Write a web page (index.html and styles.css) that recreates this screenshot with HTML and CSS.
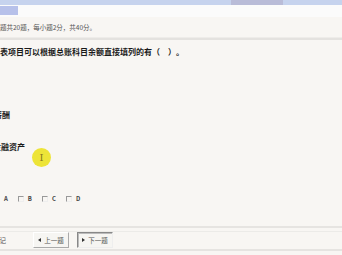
FILE: index.html
```html
<!DOCTYPE html>
<html lang="zh">
<head>
<meta charset="utf-8">
<link rel="stylesheet" href="styles.css">
</head>
<body>
<div class="page">
  <div class="topbar"><span class="tab-hl"></span></div>
  <div class="subbar"><span class="sel"></span></div>
  <div class="info">本类题共20题，每小题2分，共40分。</div>
  <div class="rule"></div>
  <div class="question">表项目可以根据总账科目余额直接填列的有（　）。</div>
  <div class="opt opt-b">应付职工薪酬</div>
  <div class="opt opt-c">交易性金融资产</div>
  <div class="answers">
    <span class="ans">A</span>
    <span class="ans"><i class="box"></i>B</span>
    <span class="ans"><i class="box"></i>C</span>
    <span class="ans"><i class="box"></i>D</span>
  </div>
  <div class="footer">
    <span class="mark">标记</span>
    <button class="btn"><i class="tri tri-l"></i>上一题</button>
    <button class="btn btn-on"><i class="tri tri-r"></i>下一题</button>
  </div>
  <div class="cursor"><span>I</span></div>
</div>
</body>
</html>
```

FILE: styles.css
```css
html, body {
  margin: 0;
  padding: 0;
  width: 342px;
  height: 255px;
  overflow: hidden;
  background: #f8f6f3;
  font-family: "Noto Sans CJK SC", "Noto Sans", sans-serif;
}
.page {
  position: relative;
  width: 342px;
  height: 255px;
  display: flex;
  flex-direction: column;
}
.topbar {
  height: 5px;
  background: #c6d3ee;
  position: relative;
}
.tab-hl {
  position: absolute;
  left: 231px;
  top: 0;
  width: 52px;
  height: 5px;
  background: #b9bcd8;
}
.subbar {
  height: 12px;
  background: #fbfbfb;
  display: flex;
  align-items: flex-start;
  padding-top: 1px;
  box-sizing: border-box;
}
.sel {
  width: 18px;
  height: 9px;
  background: #b7c1ea;
}
.info {
  height: 20px;
  line-height: 20px;
  font-size: 6.5px;
  color: #555;
  margin-left: -13px;
  white-space: nowrap;
}
.rule {
  height: 2px;
  background: #e4e2df;
  border-top: 1px solid #eeece9;
}
.question {
  margin-top: 6px;
  height: 12px;
  line-height: 12px;
  font-size: 8px;
  font-weight: bold;
  color: #1a1a1a;
  white-space: nowrap;
}
.opt {
  font-size: 8px;
  font-weight: bold;
  color: #1a1a1a;
  white-space: nowrap;
  height: 12px;
  line-height: 12px;
}
.opt-b { margin-top: 51px; margin-left: -38px; }
.opt-c { margin-top: 20px; margin-left: -31px; }
.answers {
  margin-top: 41px;
  display: flex;
  gap: 10px;
  padding-left: 4px;
  height: 10px;
  line-height: 10px;
  font-size: 6px;
  font-weight: bold;
  color: #444;
}
.ans {
  display: flex;
  align-items: center;
  gap: 4px;
}
.box {
  width: 4px;
  height: 4px;
  border-left: 1px solid #999;
  border-top: 1px solid #999;
  border-right: 1px solid #eee;
  border-bottom: 1px solid #eee;
}
.footer {
  margin-top: 22px;
  border-top: 2px solid #e6e4e1;
  border-bottom: 2px solid #e6e4e1;
  padding: 4px 0 1px;
  height: 16px;
  display: flex;
  align-items: center;
  gap: 8px;
  position: relative;
}
.footer::before {
  content: "";
  position: absolute;
  left: 0; right: 0; top: 3px;
  height: 1px;
  background: #ecebe8;
}
.mark {
  font-size: 6.5px;
  color: #555;
  margin-left: -7px;
  width: 32px;
  white-space: nowrap;
}
.btn {
  font-family: inherit;
  font-size: 6.5px;
  color: #555;
  height: 16px;
  padding: 0;
  width: 36px;
  white-space: nowrap;
  background: #f6f5f2;
  border: 1px solid;
  border-color: #fff #aaa #aaa #fff;
  display: flex;
  align-items: center;
  justify-content: center;
  gap: 3px;
}
.btn-on {
  border-color: #888 #eee #eee #888;
  box-shadow: inset 1px 1px 0 #bbb;
}
.tri {
  width: 0; height: 0;
  border-top: 2px solid transparent;
  border-bottom: 2px solid transparent;
}
.tri-l { border-right: 3px solid #333; }
.tri-r { border-left: 3px solid #333; }
.cursor {
  position: absolute;
  left: 32px;
  top: 148px;
  width: 19px;
  height: 19px;
  border-radius: 50%;
  background: #ede437;
  display: flex;
  align-items: center;
  justify-content: center;
  font-family: "DejaVu Serif", serif;
  font-size: 10px;
  color: #8a7a20;
}
```
